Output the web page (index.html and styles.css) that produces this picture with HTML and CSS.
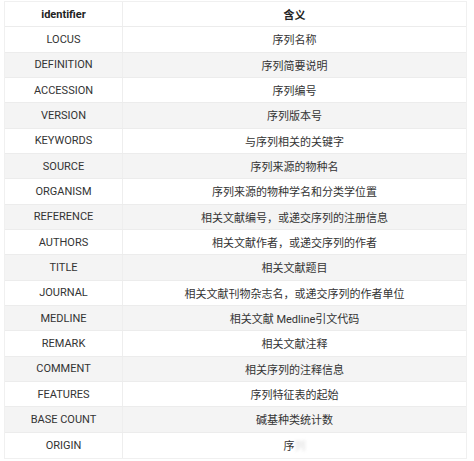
FILE: index.html
```html
<!DOCTYPE html>
<html lang="zh">
<head>
<meta charset="utf-8">
<link rel="stylesheet" href="styles.css">
</head>
<body>
<div class="table">
  <div class="row head"><div class="c1">identifier</div><div class="c2">含义</div></div>
  <div class="row"><div class="c1">LOCUS</div><div class="c2">序列名称</div></div>
  <div class="row alt"><div class="c1">DEFINITION</div><div class="c2">序列简要说明</div></div>
  <div class="row"><div class="c1">ACCESSION</div><div class="c2">序列编号</div></div>
  <div class="row alt"><div class="c1">VERSION</div><div class="c2">序列版本号</div></div>
  <div class="row"><div class="c1">KEYWORDS</div><div class="c2">与序列相关的关键字</div></div>
  <div class="row alt"><div class="c1">SOURCE</div><div class="c2">序列来源的物种名</div></div>
  <div class="row"><div class="c1">ORGANISM</div><div class="c2">序列来源的物种学名和分类学位置</div></div>
  <div class="row alt"><div class="c1">REFERENCE</div><div class="c2">相关文献编号，或递交序列的注册信息</div></div>
  <div class="row"><div class="c1">AUTHORS</div><div class="c2">相关文献作者，或递交序列的作者</div></div>
  <div class="row alt"><div class="c1">TITLE</div><div class="c2">相关文献题目</div></div>
  <div class="row"><div class="c1">JOURNAL</div><div class="c2">相关文献刊物杂志名，或递交序列的作者单位</div></div>
  <div class="row alt"><div class="c1">MEDLINE</div><div class="c2">相关文献 Medline引文代码</div></div>
  <div class="row"><div class="c1">REMARK</div><div class="c2">相关文献注释</div></div>
  <div class="row alt"><div class="c1">COMMENT</div><div class="c2">相关序列的注释信息</div></div>
  <div class="row"><div class="c1">FEATURES</div><div class="c2">序列特征表的起始</div></div>
  <div class="row alt"><div class="c1">BASE COUNT</div><div class="c2">碱基种类统计数</div></div>
  <div class="row"><div class="c1">ORIGIN</div><div class="c2">序<span class="blur">列</span></div></div>
</div>
</body>
</html>
```
FILE: styles.css
```css
html, body {
  margin: 0;
  padding: 0;
  background: #ffffff;
}
body {
  padding: 1px 0 0 4px;
  font-family: Roboto, "Noto Sans CJK SC", sans-serif;
  font-size: 11px;
  color: #333333;
}
.table {
  width: 463px;
  border: 1px solid #f0f0f0;
  box-sizing: border-box;
}
.row {
  display: grid;
  grid-template-columns: 118px 1fr;
  height: 25.33px;
  box-sizing: border-box;
  border-bottom: 1px solid #ececec;
}
.row:last-child {
  border-bottom: none;
}
.alt {
  background: #f4f4f4;
}
.c1, .c2 {
  display: flex;
  align-items: center;
  justify-content: center;
  white-space: nowrap;
}
.c1 {
  border-right: 1px solid #eeeeee;
}
.head {
  font-weight: bold;
  color: #222222;
}
.blur {
  color: #d8d8d8;
  filter: blur(1.5px);
}
```
